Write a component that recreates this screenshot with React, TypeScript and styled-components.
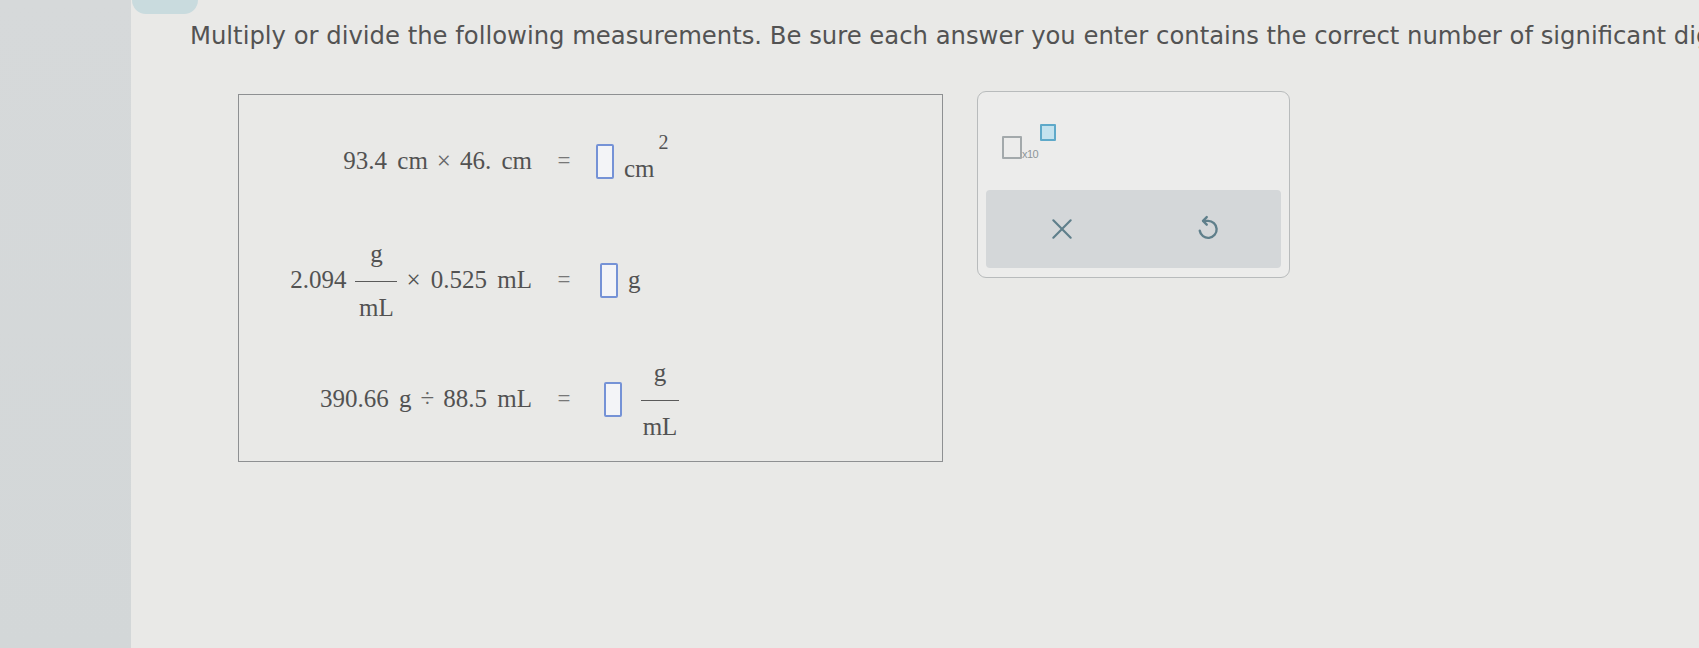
import React from "react";
import styled, { createGlobalStyle } from "styled-components";

const Global = createGlobalStyle`
  html, body { margin: 0; padding: 0; }
  body {
    background: #e9e9e7;
    width: 1699px;
    height: 648px;
    overflow: hidden;
    font-family: "DejaVu Sans", Verdana, sans-serif;
  }
`;

const Page = styled.div`
  display: flex;
  width: 1699px;
  height: 648px;
  overflow: hidden;
`;

const SideStrip = styled.div`
  width: 131px;
  flex: 0 0 131px;
  height: 100%;
  background: linear-gradient(180deg, #d6d9da 0%, #d3d7d8 100%);
`;

const Main = styled.div`
  flex: 1;
  display: flex;
  flex-direction: column;
  min-width: 0;
  background: #e9e9e7;
`;

const Tab = styled.div`
  width: 66px;
  height: 14px;
  margin-left: 1px;
  background: #c9dbde;
  border-radius: 0 0 18px 18px;
`;

const Title = styled.div`
  margin: 7px 0 0 59px;
  font-size: 24.3px;
  color: #535353;
  white-space: nowrap;
  overflow: hidden;
`;

const Content = styled.div`
  display: flex;
  align-items: flex-start;
  margin: 44px 0 0 107px;
`;

const EqBox = styled.div`
  width: 705px;
  height: 368px;
  border: 1.5px solid #8e9092;
  box-sizing: border-box;
  padding-top: 36px;
  display: grid;
  grid-template-columns: 293px 64px 1fr;
  grid-auto-rows: 60px;
  row-gap: 59px;
  align-items: center;
  font-family: "Liberation Serif", "Times New Roman", serif;
  font-size: 25px;
  color: #525252;
`;

const Expr = styled.div`
  display: flex;
  align-items: center;
  justify-content: flex-end;
  white-space: nowrap;
  word-spacing: 4px;
`;

const Eq = styled.div`
  text-align: center;
  color: #777;
  font-size: 23px;
`;

const Answer = styled.div<{ $shift?: number }>`
  display: flex;
  align-items: center;
  padding-left: ${(p) => p.$shift ?? 0}px;
  white-space: nowrap;
`;

const Op = styled.span`
  margin: 0 9px;
  color: #666;
`;

const InputBox = styled.span`
  display: inline-block;
  width: 14px;
  height: 31px;
  border: 2px solid #7592d6;
  border-radius: 2px;
  background: #f3f4f7;
  margin-right: 10px;
`;

const Unit = styled.span`
  display: inline-flex;
  align-items: flex-start;
  padding-top: 16px;
`;

const Sup = styled.span`
  font-size: 20px;
  margin-left: 4px;
  margin-top: -24px;
`;

const Frac = styled.span<{ $w: number }>`
  display: inline-flex;
  flex-direction: column;
  align-items: center;
  width: ${(p) => p.$w}px;
  margin: 0 9px;
  line-height: 1;
`;

const Num = styled.span`
  padding-bottom: 15px;
  border-bottom: 1.5px solid #5a5a5a;
  width: 100%;
  text-align: center;
`;

const Den = styled.span`
  padding-top: 13px;
`;

const Panel = styled.div`
  margin: -3px 0 0 34px;
  width: 313px;
  height: 187px;
  box-sizing: border-box;
  border: 1.5px solid #b8bbbc;
  border-radius: 9px;
  background: #ececeb;
  display: flex;
  flex-direction: column;
  padding: 0 8px 9px 8px;
`;

const SciRow = styled.div`
  flex: 1;
  display: flex;
  align-items: flex-start;
  padding: 32px 0 0 16px;
`;

const BaseBox = styled.span`
  display: inline-block;
  width: 16px;
  height: 19px;
  margin-top: 12px;
  border: 2px solid #a3a9ab;
  border-radius: 1px;
`;

const TenText = styled.span`
  font-family: "Liberation Sans", Arial, sans-serif;
  font-size: 11px;
  color: #8c9699;
  margin-top: 24px;
  letter-spacing: -0.6px;
`;

const ExpBox = styled.span`
  display: inline-block;
  width: 12px;
  height: 13px;
  margin-left: 2px;
  border: 2px solid #5ea9c9;
  background: #c3e2ee;
  border-radius: 1px;
`;

const ButtonBar = styled.div`
  height: 78px;
  border-radius: 4px;
  background: #d4d7d9;
  display: flex;
  align-items: center;
  gap: 106px;
  padding-left: 56px;
`;

const IconButton = styled.button`
  border: none;
  background: transparent;
  width: 40px;
  height: 40px;
  display: flex;
  align-items: center;
  justify-content: center;
  padding: 0;
  color: #5f7f8b;
`;

const CloseIcon = () => (
  <svg width="26" height="26" viewBox="0 0 24 24" fill="none" stroke="currentColor" strokeWidth="2" strokeLinecap="round">
    <path d="M4 4 L20 20 M20 4 L4 20" />
  </svg>
);

const UndoIcon = () => (
  <svg width="30" height="30" viewBox="0 0 24 24" fill="none" stroke="currentColor" strokeWidth="1.9" strokeLinecap="round" strokeLinejoin="round">
    <path d="M8.5 5.5 H12 A6.8 6.8 0 1 1 5.4 13.4" />
    <path d="M11 2.5 L8 5.5 L11 8.5" />
  </svg>
);

export default function App() {
  return (
    <>
      <Global />
      <Page>
        <SideStrip />
        <Main>
          <Tab />
          <Title>
            Multiply or divide the following measurements. Be sure each answer you enter contains the correct number of significant digits.
          </Title>
          <Content>
            <EqBox>
              <Expr>
                93.4 cm<Op>×</Op>46. cm
              </Expr>
              <Eq>=</Eq>
              <Answer>
                <InputBox />
                <Unit>
                  cm<Sup>2</Sup>
                </Unit>
              </Answer>

              <Expr>
                2.094
                <Frac $w={42}>
                  <Num>g</Num>
                  <Den>mL</Den>
                </Frac>
                × 0.525 mL
              </Expr>
              <Eq>=</Eq>
              <Answer $shift={4}>
                <InputBox />
                g
              </Answer>

              <Expr>
                390.66 g<Op>÷</Op>88.5 mL
              </Expr>
              <Eq>=</Eq>
              <Answer $shift={8}>
                <InputBox />
                <Frac $w={38}>
                  <Num>g</Num>
                  <Den>mL</Den>
                </Frac>
              </Answer>
            </EqBox>
            <Panel>
              <SciRow>
                <BaseBox />
                <TenText>x10</TenText>
                <ExpBox />
              </SciRow>
              <ButtonBar>
                <IconButton aria-label="clear">
                  <CloseIcon />
                </IconButton>
                <IconButton aria-label="undo">
                  <UndoIcon />
                </IconButton>
              </ButtonBar>
            </Panel>
          </Content>
        </Main>
      </Page>
    </>
  );
}
